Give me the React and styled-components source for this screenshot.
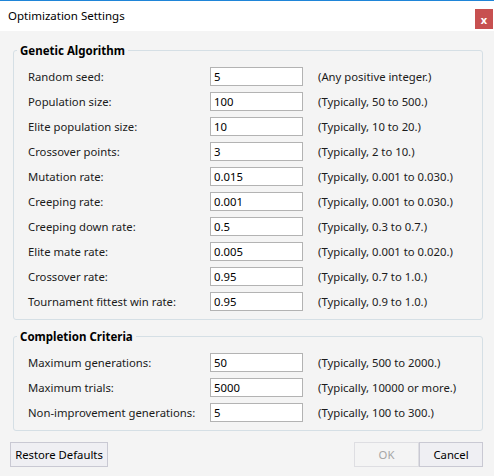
import React from 'react'
import styled, { createGlobalStyle } from 'styled-components'

const GlobalStyle = createGlobalStyle`
  html, body {
    margin: 0;
    padding: 0;
    background: #ffffff;
  }
  body {
    font-family: "Noto Sans", "Open Sans", sans-serif;
    font-size: 11.3px;
    color: #1b1b1b;
  }
`

const geneticRows = [
  { label: 'Random seed:', value: '5', hint: '(Any positive integer.)' },
  { label: 'Population size:', value: '100', hint: '(Typically, 50 to 500.)' },
  { label: 'Elite population size:', value: '10', hint: '(Typically, 10 to 20.)' },
  { label: 'Crossover points:', value: '3', hint: '(Typically, 2 to 10.)' },
  { label: 'Mutation rate:', value: '0.015', hint: '(Typically, 0.001 to 0.030.)' },
  { label: 'Creeping rate:', value: '0.001', hint: '(Typically, 0.001 to 0.030.)' },
  { label: 'Creeping down rate:', value: '0.5', hint: '(Typically, 0.3 to 0.7.)' },
  { label: 'Elite mate rate:', value: '0.005', hint: '(Typically, 0.001 to 0.020.)' },
  { label: 'Crossover rate:', value: '0.95', hint: '(Typically, 0.7 to 1.0.)' },
  { label: 'Tournament fittest win rate:', value: '0.95', hint: '(Typically, 0.9 to 1.0.)' },
]

const completionRows = [
  { label: 'Maximum generations:', value: '50', hint: '(Typically, 500 to 2000.)' },
  { label: 'Maximum trials:', value: '5000', hint: '(Typically, 10000 or more.)' },
  { label: 'Non-improvement generations:', value: '5', hint: '(Typically, 100 to 300.)' },
]

const Window = styled.div`
  width: 494px;
  height: 476px;
  box-sizing: border-box;
  border-top: 1px solid #1f85d8;
  display: flex;
  flex-direction: column;
`

const TitleBar = styled.div`
  height: 30px;
  background: #ffffff;
  display: flex;
  align-items: center;
  justify-content: space-between;
  padding-left: 8px;
`

const Title = styled.span`
  font-size: 11.5px;
  color: #000000;
  margin-top: -1px;
`

const CloseButton = styled.div`
  width: 18px;
  height: 20px;
  margin-right: 1px;
  margin-top: 6px;
  background: #c75050;
  color: #ffffff;
  font-weight: bold;
  font-size: 11px;
  display: flex;
  align-items: center;
  justify-content: center;
  line-height: 1;
`

const Body = styled.div`
  flex: 1;
  background: #f4f4f4;
  padding: 12px 11px 9px 13px;
  display: flex;
  flex-direction: column;
  gap: 9px;
`

const Group = styled.fieldset`
  margin: 0;
  border: 1px solid #d5dfe5;
  border-radius: 3px;
  padding: 0 14px 8px 14px;
  min-width: 0;
`

const Legend = styled.legend`
  font-weight: bold;
  color: #000000;
  padding: 0 3px;
  margin-left: -11px;
  font-size: 11.5px;
`

const Rows = styled.div`
  display: flex;
  flex-direction: column;
  gap: 6px;
  margin-top: 9px;
`

const Row = styled.div`
  display: grid;
  grid-template-columns: 182px 93px auto;
  column-gap: 0;
  align-items: center;
  height: 19px;
`

const Label = styled.span`
  white-space: nowrap;
`

const Field = styled.div`
  box-sizing: border-box;
  height: 19px;
  background: #ffffff;
  border: 1px solid #b3b3b3;
  padding: 0 3px;
  display: flex;
  align-items: center;
  color: #000000;
`

const Hint = styled.span`
  white-space: nowrap;
  padding-left: 15px;
`

const Footer = styled.div`
  margin-top: auto;
  display: flex;
  justify-content: space-between;
  align-items: flex-end;
  margin-left: -3px;
`

const ButtonGroup = styled.div`
  display: flex;
`

const Button = styled.div`
  box-sizing: border-box;
  height: 25px;
  width: ${p => p.$width || 64}px;
  display: flex;
  align-items: center;
  justify-content: center;
  white-space: nowrap;
  background: ${p => (p.$disabled ? '#f4f4f4' : '#efeff3')};
  border: 1px solid ${p => (p.$disabled ? '#dedee2' : '#c9c9d3')};
  color: ${p => (p.$disabled ? '#a6a6a6' : '#000000')};
`

const Section = ({ title, rows }) => (
  <Group>
    <Legend>{title}</Legend>
    <Rows>
      {rows.map(r => (
        <Row key={r.label}>
          <Label>{r.label}</Label>
          <Field>{r.value}</Field>
          <Hint>{r.hint}</Hint>
        </Row>
      ))}
    </Rows>
  </Group>
)

export default function App() {
  return (
    <>
      <GlobalStyle />
      <Window>
        <TitleBar>
          <Title>Optimization Settings</Title>
          <CloseButton>x</CloseButton>
        </TitleBar>
        <Body>
          <Section title="Genetic Algorithm" rows={geneticRows} />
          <Section title="Completion Criteria" rows={completionRows} />
          <Footer>
            <Button $width={98}>Restore Defaults</Button>
            <ButtonGroup>
              <Button $width={65} $disabled>OK</Button>
              <Button $width={64}>Cancel</Button>
            </ButtonGroup>
          </Footer>
        </Body>
      </Window>
    </>
  )
}
